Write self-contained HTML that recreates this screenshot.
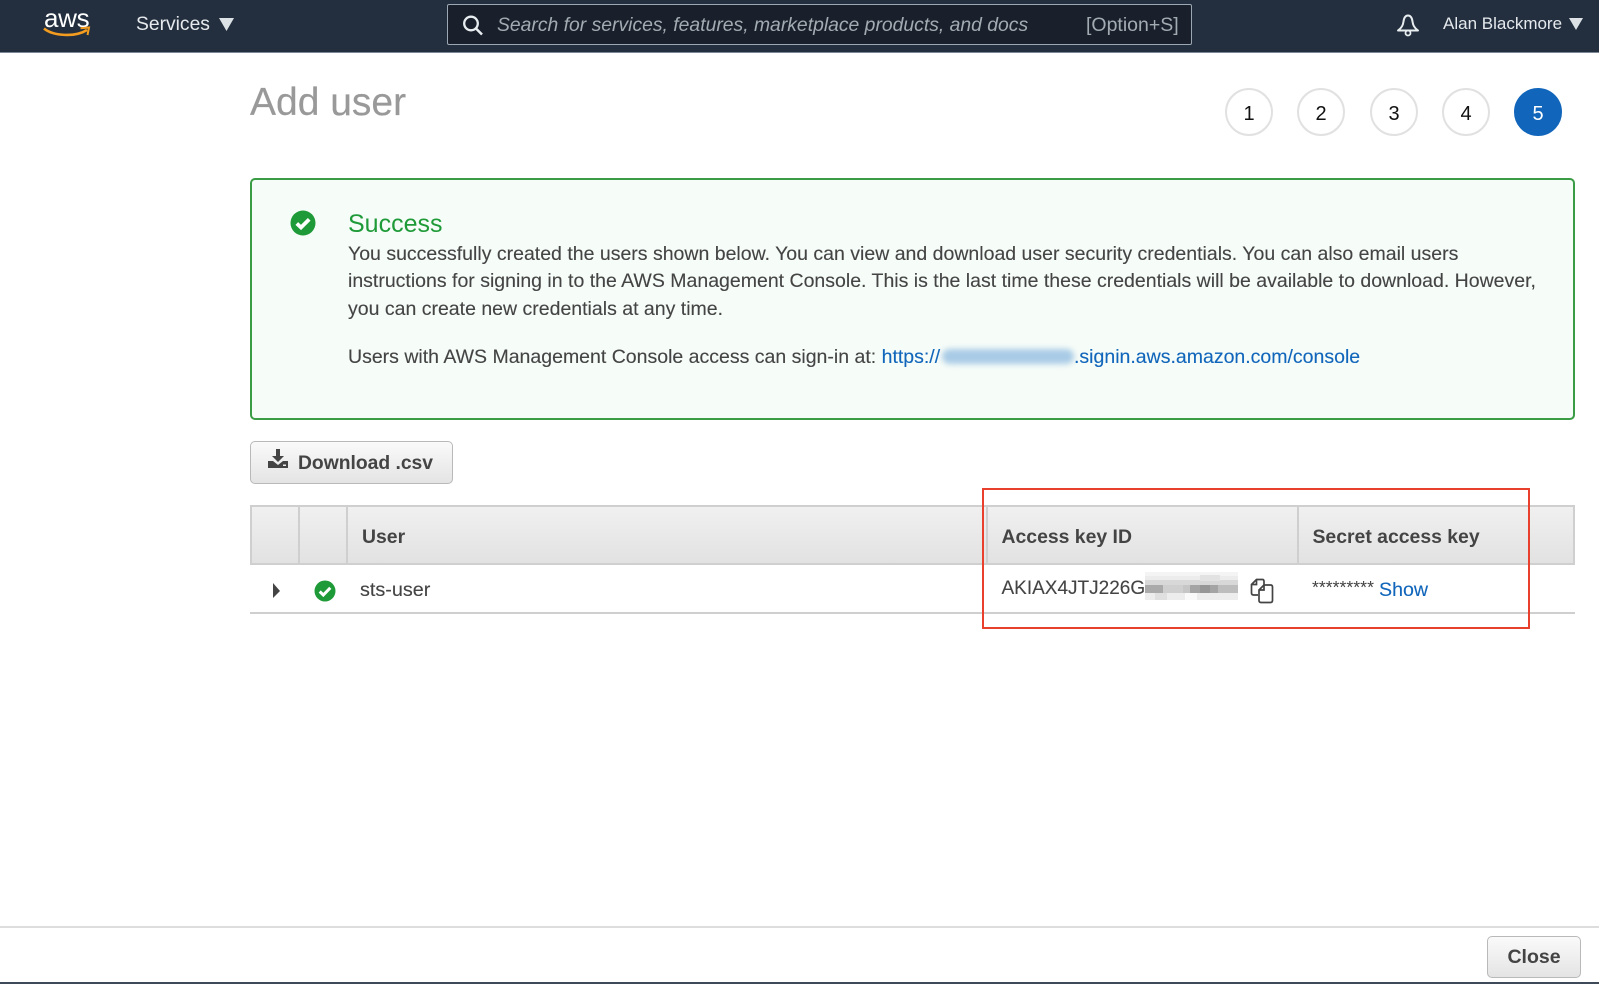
<!DOCTYPE html>
<html lang="en">
<head>
<meta charset="utf-8">
<title>Add user</title>
<style>
html,body{margin:0;padding:0;background:#fff}
body{width:1599px;height:984px;position:relative;overflow:hidden;font-family:"Liberation Sans",Arial,sans-serif;color:#444}
.a{position:absolute;white-space:nowrap}
.nav{position:absolute;left:0;top:0;width:1599px;height:52px;background:#232f3e;border-bottom:1.5px solid #7b8794}
.search{position:absolute;left:447px;top:4px;width:743px;height:39px;background:#1a202b;border:1.5px solid #9ba7b2;border-radius:2px}
.c{position:absolute;top:88px;width:44px;height:44px;border:2px solid #e1e1e1;border-radius:50%;background:#fff;color:#111;font-size:20px;line-height:49px;text-align:center}
.c.on{background:#1166bb;border-color:#1166bb;color:#fff}
.alert{position:absolute;left:250px;top:178px;width:1321px;height:238px;border:2px solid #3b9c46;border-radius:5px;background:#f6fcf8}
.t{font-size:19.5px;color:#444;line-height:27px;-webkit-text-stroke:.12px #444}
.link{color:#1166bb;-webkit-text-stroke:.12px #1166bb}
.btn{position:absolute;box-sizing:border-box;background:linear-gradient(#fafafa,#e4e4e4);border:1.5px solid #b9b9b9;border-radius:5px;font-weight:bold;color:#444;font-size:19.3px;text-align:center}
.th{position:absolute;left:250px;top:505px;width:1321px;height:56px;background:linear-gradient(#f0f0f0,#e2e2e2);border:2px solid #cfcfcf}
.v{position:absolute;top:505px;height:58px;width:2px;background:#cfcfcf}
.h{font-size:19.4px;font-weight:bold;color:#444}
</style>
</head>
<body>
<div class="nav"></div>
<div class="a" style="left:44px;top:3px;font-size:26px;line-height:30px;color:#fff;letter-spacing:-.3px">aws</div>
<svg class="a" style="left:43px;top:25px" width="48" height="15" viewBox="0 0 48 15"><path d="M1 3.5C10 11 32 12.500 44 5" fill="none" stroke="#f39c1f" stroke-width="2.600"/><path d="M37.500 3.300L46 2.500L44.500 10" fill="none" stroke="#f39c1f" stroke-width="2"/></svg>
<div class="a" style="left:136px;top:13px;font-size:19.3px;line-height:24px;color:#e6eaee">Services</div>
<svg class="a" style="left:219px;top:18px" width="16" height="13"><path d="M0 0H15L7.500 13Z" fill="#dbe1e5"/></svg>
<div class="search"></div>
<svg class="a" style="left:460px;top:13px" width="24" height="24" viewBox="0 0 24 24"><circle cx="11" cy="10.500" r="6.800" fill="none" stroke="#e8edf0" stroke-width="2.300"/><path d="M16 15.500L22 21.500" stroke="#e8edf0" stroke-width="2.500"/></svg>
<div class="a" style="left:497px;top:13px;font-size:19.35px;line-height:25px;font-style:italic;color:#a3abb2">Search for services, features, marketplace products, and docs</div>
<div class="a" style="left:1086px;top:13px;font-size:19.5px;line-height:25px;color:#a3abb2">[Option+S]</div>
<svg class="a" style="left:1396px;top:13px" width="24" height="24" viewBox="0 0 24 24"><path d="M2 17.500C6 14.500 7 12 7.500 8.500C8 5 9.500 2.500 12 2.500C14.500 2.500 16 5 16.500 8.500C17 12 18 14.500 22 17.500Z" fill="none" stroke="#e8edf0" stroke-width="2" stroke-linejoin="round"/><circle cx="12" cy="20" r="2.500" fill="none" stroke="#e8edf0" stroke-width="1.800"/></svg>
<div class="a" style="left:1443px;top:12px;font-size:17px;line-height:24px;color:#e6eaee">Alan Blackmore</div>
<svg class="a" style="left:1569px;top:18px" width="14" height="12"><path d="M0 0H14L7 12Z" fill="#dbe1e5"/></svg>

<div class="a" style="left:250px;top:80px;font-size:39px;line-height:46px;color:#999;-webkit-text-stroke:.2px #999">Add user</div>
<div class="c" style="left:1225px">1</div>
<div class="c" style="left:1297px">2</div>
<div class="c" style="left:1370px">3</div>
<div class="c" style="left:1442px">4</div>
<div class="c on" style="left:1514px">5</div>

<div class="alert"></div>
<svg class="a" style="left:290px;top:210px" width="26" height="26" viewBox="0 0 26 26"><circle cx="13" cy="13" r="12.500" fill="#1f9a38"/><path d="M6.800 13.500L11 17.500L19.200 9.300" fill="none" stroke="#fff" stroke-width="3.800"/></svg>
<div class="a" style="left:348px;top:209px;font-size:25px;line-height:30px;color:#1f9a38">Success</div>
<div class="a t" style="left:348px;top:240.500px">You successfully created the users shown below. You can view and download user security credentials. You can also email users</div>
<div class="a t" style="left:348px;top:268px">instructions for signing in to the AWS Management Console. This is the last time these credentials will be available to download. However,</div>
<div class="a t" style="left:348px;top:295.500px">you can create new credentials at any time.</div>
<div class="a t" style="left:348px;top:344px">Users with AWS Management Console access can sign-in at: <span class="link">https://</span></div>
<div class="a" style="left:942px;top:349px;width:132px;height:15px;background:#a9cbe6;border-radius:8px;filter:blur(3px)"></div>
<div class="a t link" style="left:1074px;top:344px">.signin.aws.amazon.com/console</div>

<div class="btn" style="left:250px;top:441px;width:203px;height:43px;line-height:43.500px;padding-left:28px">Download .csv</div>
<svg class="a" style="left:267px;top:449px" width="22" height="20" viewBox="0 0 22 20"><path d="M9 0H13V7H17L11 13L5 7H9Z" fill="#444"/><path d="M1 12H6L11 16L16 12H21V19H1Z" fill="#444"/><rect x="16" y="15.500" width="3" height="1.500" fill="#eee"/></svg>

<div class="th"></div>
<div class="v" style="left:298px"></div>
<div class="v" style="left:346px"></div>
<div class="v" style="left:986px"></div>
<div class="v" style="left:1297px"></div>
<div class="a h" style="left:362px;top:524.500px;line-height:24px">User</div>
<div class="a h" style="left:1001.500px;top:524.500px;line-height:24px">Access key ID</div>
<div class="a h" style="left:1312.500px;top:524.500px;line-height:24px">Secret access key</div>

<svg class="a" style="left:272px;top:583px" width="9" height="16"><path d="M1 0L8 8L1 15Z" fill="#444"/></svg>
<svg class="a" style="left:314px;top:580px" width="22" height="22" viewBox="0 0 22 22"><circle cx="11" cy="11" r="10.500" fill="#1f9a38"/><path d="M5.700 11.500L9.300 15L16.300 7.800" fill="none" stroke="#fff" stroke-width="3"/></svg>
<div class="a t" style="left:360px;top:576.500px;line-height:27px;font-size:19.8px">sts-user</div>
<div class="a t" style="left:1001.500px;top:575px;line-height:27px;font-size:19px">AKIAX4JTJ226G</div>
<svg class="a" style="left:1145px;top:572px" width="93" height="28" shape-rendering="crispEdges"><rect width="93" height="28" fill="#f4f4f4"/><rect y="4" width="93" height="4" fill="#ececec"/><rect y="8" width="93" height="5" fill="#d8d8d8"/><rect y="13" width="93" height="8" fill="#c6c6c6"/><rect y="21" width="93" height="7" fill="#ededed"/><rect x="0" y="13" width="18" height="8" fill="#aaa"/><rect x="18" y="13" width="20" height="8" fill="#cfcfcf"/><rect x="45" y="13" width="28" height="8" fill="#a4a4a4"/><rect x="55" y="13" width="10" height="8" fill="#969696"/><rect x="73" y="13" width="20" height="8" fill="#bdbdbd"/><rect x="10" y="21" width="12" height="7" fill="#e0e0e0"/><rect x="40" y="21" width="12" height="7" fill="#fafafa"/><rect x="55" y="3" width="20" height="6" fill="#e2e2e2"/></svg>
<svg class="a" style="left:1250px;top:578px" width="24" height="26" viewBox="0 0 24 26" fill="none" stroke="#444" stroke-width="1.700"><path d="M8 17H3.500Q1.500 17 1.500 15V6.500L6.500 1.500H12.500Q14 1.500 14 3.500V7M6.500 1.500V6.500H1.500"/><path d="M9 12L14 7H20.500Q22.500 7 22.500 9V22.500Q22.500 24.500 20.500 24.500H11Q9 24.500 9 22.500Z" fill="#fff"/><path d="M14 7V12H9"/></svg>
<div class="a" style="left:1312px;top:575px;font-size:17.7px;line-height:24px;color:#444">*********</div>
<div class="a t link" style="left:1379px;top:577px;font-size:19.6px">Show</div>
<div class="a" style="left:250px;top:612px;width:1325px;height:1.500px;background:#cfcfcf"></div>

<div class="a" style="left:982px;top:488px;width:544px;height:137px;border:2px solid #e8402c"></div>

<div class="a" style="left:0;top:926px;width:1599px;height:1.500px;background:#ddd"></div>
<div class="btn" style="left:1487px;top:936px;width:94px;height:42px;line-height:41px;font-size:19.5px">Close</div>
<div class="a" style="left:0;top:982px;width:1599px;height:2px;background:#3e4a57"></div>
</body>
</html>
